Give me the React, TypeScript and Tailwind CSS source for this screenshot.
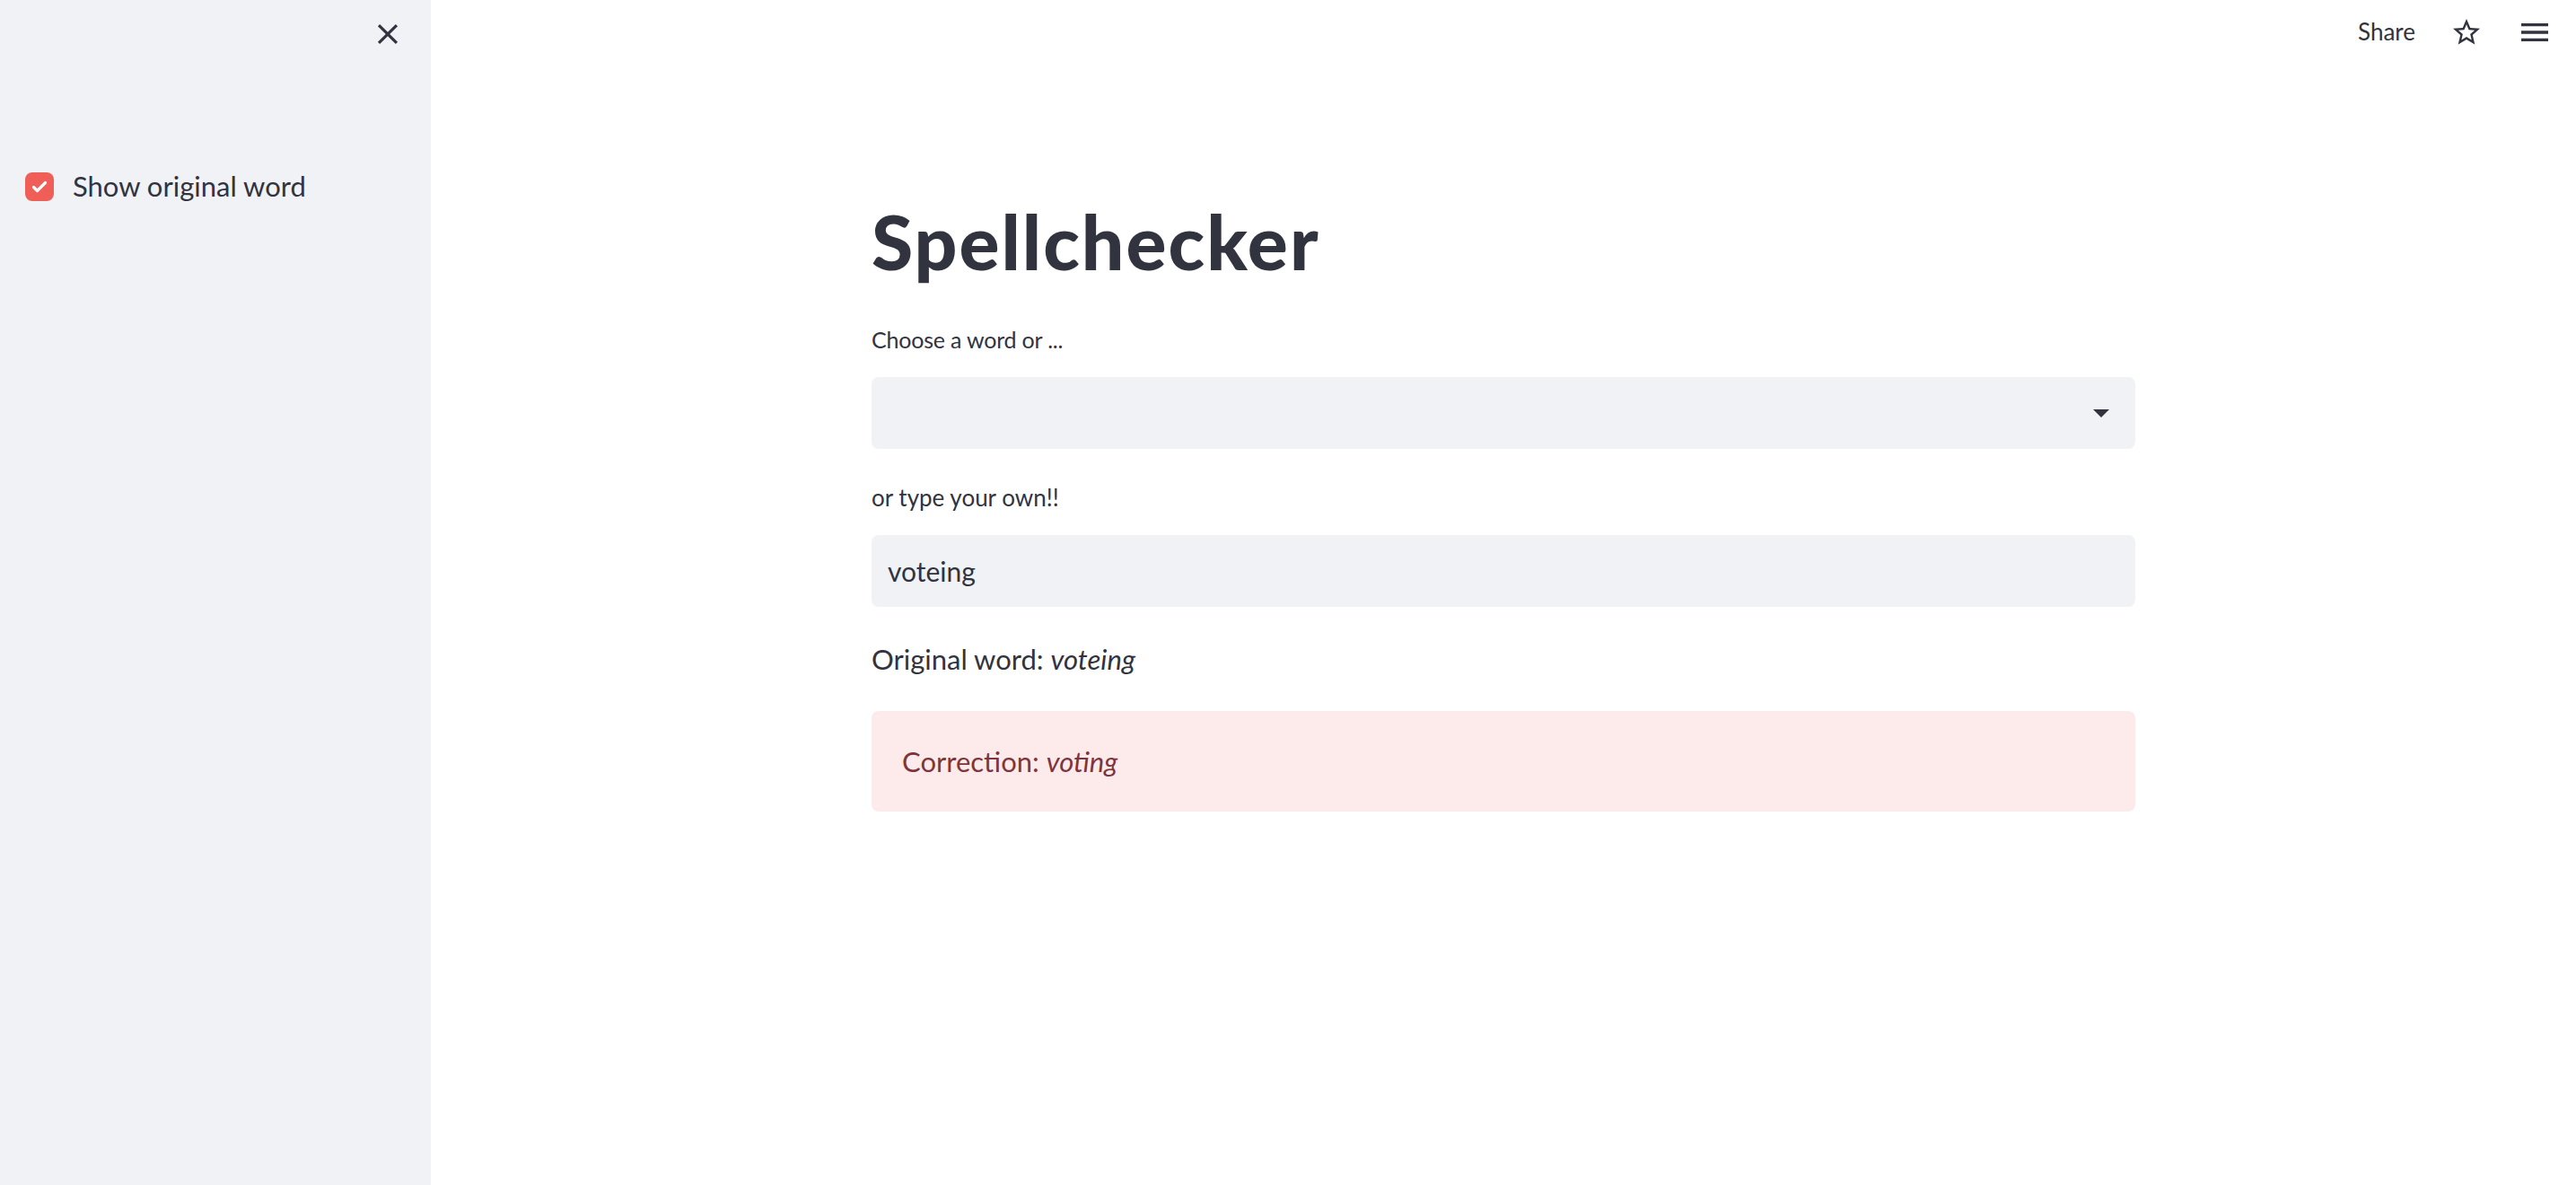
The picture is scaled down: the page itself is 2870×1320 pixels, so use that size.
import { useState } from "react";

const CloseIcon = () => (
  <svg width="38" height="38" viewBox="0 0 24 24" fill="#31333f">
    <path d="M19 6.41L17.59 5 12 10.59 6.41 5 5 6.41 10.59 12 5 17.59 6.41 19 12 13.41 17.59 19 19 17.59 13.41 12z" />
  </svg>
);

const StarIcon = () => (
  <svg width="36" height="36" viewBox="0 0 24 24" fill="#31333f">
    <path d="M22 9.24l-7.19-.62L12 2 9.19 8.63 2 9.24l5.46 4.73L5.82 21 12 17.27 18.18 21l-1.63-7.03L22 9.24zM12 15.4l-3.76 2.27 1-4.28-3.32-2.88 4.38-.38L12 6.1l1.71 4.04 4.38.38-3.32 2.88 1 4.28L12 15.4z" />
  </svg>
);

const MenuIcon = () => (
  <svg width="40" height="40" viewBox="0 0 24 24" fill="#31333f">
    <path d="M3 18h18v-2H3v2zm0-5h18v-2H3v2zm0-7v2h18V6H3z" />
  </svg>
);

const App = () => {
  const [showOriginal, setShowOriginal] = useState(true);
  const [word, setWord] = useState("voteing");

  return (
    <div className="flex h-[1320px] w-full font-['Lato',sans-serif] text-[#31333f]">
      {/* sidebar */}
      <aside className="w-[480px] shrink-0 bg-[#f0f2f6] flex flex-col">
        <div className="flex justify-end pt-[19px] pr-[29px]">
          <CloseIcon />
        </div>
        <label className="mt-[132px] ml-[28px] flex items-center gap-[21px] cursor-pointer">
          <span
            onClick={() => setShowOriginal(!showOriginal)}
            className={`w-[32px] h-[32px] rounded-[8px] flex items-center justify-center ${showOriginal ? "bg-[#f05e58]" : "bg-white border-2 border-[#d6d6d9]"}`}
          >
            {showOriginal && (
              <svg width="20" height="20" viewBox="0 0 20 20" fill="none">
                <path d="M3.5 10.5l4 4 9-9" stroke="white" strokeWidth="3.2" strokeLinecap="round" strokeLinejoin="round" />
              </svg>
            )}
          </span>
          <span className="text-[31px] leading-[1.2]">Show original word</span>
        </label>
      </aside>

      {/* main */}
      <main className="flex-1 flex flex-col bg-white">
        <header className="h-[72px] flex items-center justify-end pr-[26px]">
          <span className="text-[26px] leading-[1.2]">Share</span>
          <span className="ml-[39px]"><StarIcon /></span>
          <span className="ml-[38px]"><MenuIcon /></span>
        </header>

        <div className="mx-auto w-[1408px] flex flex-col">
          <h1 className="mt-[147px] text-[84px] leading-[1.2] font-black tracking-[2px]">Spellchecker</h1>

          <p className="mt-[38px] text-[25px] leading-[1.65] tracking-[-0.2px]">Choose a word or ...</p>
          <div className="mt-[21px] h-[80px] rounded-[8px] bg-[#f0f2f6] flex items-center justify-end pr-[29px]">
            <svg width="18" height="9" viewBox="0 0 18 9">
              <polygon points="0,0 18,0 9,9" fill="#31333f" />
            </svg>
          </div>

          <p className="mt-[34px] text-[26px] leading-[1.6]">or type your own!!</p>
          <input
            value={word}
            onChange={(e) => setWord(e.target.value)}
            className="mt-[20px] h-[80px] rounded-[8px] bg-[#f0f2f6] pl-[18px] text-[30px] outline-none"
          />

          {showOriginal && (
            <p className="mt-[35px] text-[31px] leading-[1.5]">
              Original word: <em>{word}</em>
            </p>
          )}

          <div className="mt-[35px] h-[112px] rounded-[8px] bg-[#fdebeb] flex items-center px-[34px]">
            <p className="text-[31px] leading-[1.5] text-[#7d353b]">
              Correction: <em>voting</em>
            </p>
          </div>
        </div>
      </main>
    </div>
  );
};

export default App;
